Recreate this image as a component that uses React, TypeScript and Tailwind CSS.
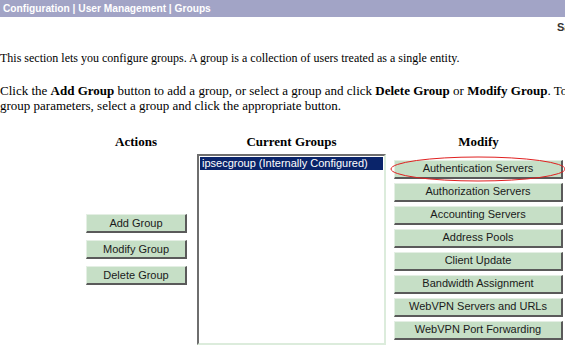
import React from "react";

const modifyButtons = [
  "Authentication Servers",
  "Authorization Servers",
  "Accounting Servers",
  "Address Pools",
  "Client Update",
  "Bandwidth Assignment",
  "WebVPN Servers and URLs",
  "WebVPN Port Forwarding",
];

const actionButtons = ["Add Group", "Modify Group", "Delete Group"];

function GreenButton({ label, width }: { label: string; width: string }) {
  return (
    <button
      className={`${width} h-[19px] flex items-center justify-center bg-[#c6dfc6] border-t border-l border-t-[#e4efe4] border-l-[#e4efe4] border-r-2 border-b-2 border-r-[#5a5a5a] border-b-[#5a5a5a] text-[11px] text-[#1a1a1a] leading-none`}
      style={{ fontFamily: "'Liberation Sans', Arial, sans-serif" }}
    >
      {label}
    </button>
  );
}

export default function App() {
  return (
    <div className="w-[565px] h-[347px] overflow-hidden bg-white">
      <div className="w-[660px]">
        {/* Title bar */}
        <div
          className="h-[17px] bg-[#a2a4c6] text-white font-bold text-[10.2px] leading-[17px] pl-[3px]"
          style={{ fontFamily: "'Liberation Sans', Arial, sans-serif" }}
        >
          Configuration | User Management | Groups
        </div>
        <div
          className="h-[15px] pl-[557px] mt-[3px] text-[11px] font-bold text-[#333] leading-[15px] whitespace-nowrap"
          style={{ fontFamily: "'Liberation Sans', Arial, sans-serif" }}
        >
          Save Needed
        </div>

        {/* Description */}
        <div
          className="leading-[15px] text-black"
          style={{ fontFamily: "'Liberation Serif', 'Times New Roman', serif" }}
        >
          <p className="mt-[16px] text-[12px]">
            This section lets you configure groups. A group is a collection of users treated as a single entity.
          </p>
          <p className="mt-[17px] text-[13px] whitespace-nowrap">
            Click the <b>Add Group</b> button to add a group, or select a group and click <b>Delete Group</b> or{" "}
            <b>Modify Group</b>. To modify other
            <br />
            group parameters, select a group and click the appropriate button.
          </p>
        </div>

        {/* Table */}
        <div className="pl-[75px] mt-[21px]">
          <div
            className="flex text-[13px] font-bold leading-[16px] text-black"
            style={{ fontFamily: "'Liberation Serif', 'Times New Roman', serif" }}
          >
            <div className="w-[122px] text-center">Actions</div>
            <div className="w-[189px] text-center">Current Groups</div>
            <div className="w-[169px] ml-[8px] text-center">Modify</div>
          </div>

          <div className="flex items-center mt-[4px]">
            <div className="w-[122px] flex flex-col items-center gap-[7px] pl-[1px]">
              {actionButtons.map((b) => (
                <GreenButton key={b} label={b} width="w-[101px]" />
              ))}
            </div>

            <div className="w-[189px] h-[191px] bg-white border-2 border-t-[#6e6e6e] border-l-[#6e6e6e] border-r-[#dcecdc] border-b-[#dcecdc] p-[1px]">
              <div
                className="h-[13px] bg-[#0a246a] text-white text-[11px] leading-[13px] pl-[2px] whitespace-nowrap"
                style={{ fontFamily: "'Liberation Sans', Arial, sans-serif" }}
              >
                ipsecgroup (Internally Configured)
              </div>
            </div>

            <div className="relative w-[169px] ml-[8px] flex flex-col gap-[4px]">
              {modifyButtons.map((b) => (
                <GreenButton key={b} label={b} width="w-[169px]" />
              ))}
              <svg
                className="absolute -left-[4px] -top-[4px] pointer-events-none"
                width="180"
                height="28"
                viewBox="0 0 180 28"
              >
                <ellipse cx="88" cy="13" rx="87" ry="12" fill="none" stroke="#e02020" strokeWidth="1" />
              </svg>
            </div>
          </div>
        </div>
      </div>
    </div>
  );
}
